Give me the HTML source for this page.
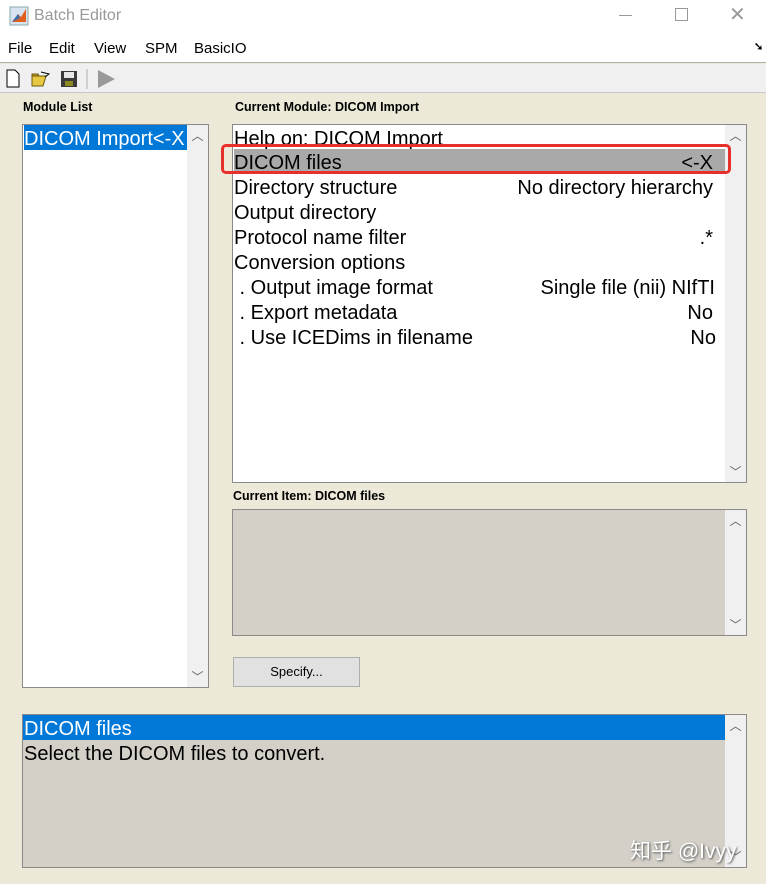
<!DOCTYPE html>
<html><head><meta charset="utf-8"><style>
*{margin:0;padding:0;box-sizing:border-box}
body{width:766px;height:884px;background:#ece9d8;font-family:"Liberation Sans",Arial,sans-serif;position:relative;overflow:hidden}
.a{position:absolute}
.title{left:0;top:0;width:766px;height:32px;background:#fff}
.menu{left:0;top:32px;width:766px;height:31px;background:#fff;border-bottom:1px solid #b0b0b0}
.tool{left:0;top:64px;width:766px;height:29px;background:#f0f0f0;border-bottom:1px solid #c8c8c8}
.lbl{font-size:12.5px;font-weight:bold;color:#000}
.box{border:1px solid #8a8a8a;background:#fff}
.sb{position:absolute;right:0;top:0;bottom:0;width:21px;background:#f0f0f0}
.sb .u,.sb .d{position:absolute;left:0;width:21px;text-align:center;font-size:12px;color:#606060}
.row{position:absolute;left:1px;height:25px;font-size:20px;line-height:25px;white-space:nowrap}
.t{position:absolute;left:0;top:2px}
.row span{position:absolute;right:12px;top:2px}
</style></head><body>
<div class="a title">
 <svg class="a" style="left:9px;top:6px" width="20" height="20"><rect x="1" y="1" width="18" height="18" fill="#d8e4f0" stroke="#8aa"/><path d="M3 16 L9 8 L12 11 L17 3 L17 16 Z" fill="#e06020"/><path d="M3 16 L9 8 L11 12 Z" fill="#3a6fb0"/></svg>
 <div class="a" style="left:34px;top:7px;font-size:16px;color:#999">Batch Editor</div>
 <div class="a" style="left:619px;top:15px;width:13px;height:1px;background:#999"></div>
 <div class="a" style="left:675px;top:8px;width:13px;height:13px;border:1px solid #999"></div>
 <div class="a" style="left:729px;top:2px;font-size:20px;color:#999">✕</div>
</div>
<div class="a menu">
 <div class="a" style="left:8px;top:8px;font-size:15px">File</div>
 <div class="a" style="left:49px;top:8px;font-size:15px">Edit</div>
 <div class="a" style="left:94px;top:8px;font-size:15px">View</div>
 <div class="a" style="left:145px;top:8px;font-size:15px">SPM</div>
 <div class="a" style="left:194px;top:8px;font-size:15px">BasicIO</div>
 <div class="a" style="left:754px;top:8px;font-size:11px;font-weight:bold">➘</div>
</div>
<div class="a tool">
 <svg class="a" style="left:5px;top:5px" width="85" height="20">
  <path d="M2 1 H10 L14 5 V18 H2 Z" fill="#fff" stroke="#000"/>
  <path d="M27 7 H41 L38 17 H27 Z" fill="#e8c840" stroke="#6a5a10"/><path d="M27 5 H33 L34 7 H27Z" fill="#c8a020" stroke="#6a5a10"/><path d="M36 3 L44 5 L40 8" fill="none" stroke="#000"/>
  <rect x="56" y="2" width="16" height="16" fill="#3a3a3a"/><rect x="59" y="3" width="10" height="6" fill="#e8e8e8"/><rect x="60" y="12" width="8" height="5" fill="#8a8a20"/>
  <line x1="82" y1="0" x2="82" y2="22" stroke="#b0b0b0"/>
 </svg>
 <svg class="a" style="left:96px;top:4px" width="22" height="22"><path d="M2 2 L19 11 L2 20 Z" fill="#9a9a9a"/></svg>
</div>

<div class="a lbl" style="left:23px;top:100px">Module List</div>
<div class="a box" style="left:22px;top:124px;width:187px;height:564px">
 <div class="row" style="top:0;width:164px;background:#0078d7;color:#fff;left:1px"><div class="t">DICOM Import&lt;-X</div></div>
 <div class="sb"><div class="u" style="top:2px">︿</div><div class="d" style="bottom:2px">﹀</div></div>
</div>

<div class="a lbl" style="left:235px;top:100px">Current Module: DICOM Import</div>
<div class="a box" style="left:232px;top:124px;width:515px;height:359px">
 <div class="row" style="top:0"><div class="t">Help on: DICOM Import</div></div>
 <div class="row" style="top:24px;width:491px;background:#a9a9a9"><div class="t">DICOM files</div><span>&lt;-X</span></div>
 <div class="row" style="top:49px;width:491px"><div class="t">Directory structure</div><span>No directory hierarchy</span></div>
 <div class="row" style="top:74px"><div class="t">Output directory</div></div>
 <div class="row" style="top:99px;width:491px"><div class="t">Protocol name filter</div><span>.*</span></div>
 <div class="row" style="top:124px"><div class="t">Conversion options</div></div>
 <div class="row" style="top:149px;width:491px"><div class="t">&nbsp;. Output image format</div><span style="right:10px">Single file (nii) NIfTI</span></div>
 <div class="row" style="top:174px;width:491px"><div class="t">&nbsp;. Export metadata</div><span>No</span></div>
 <div class="row" style="top:199px;width:491px"><div class="t">&nbsp;. Use ICEDims in filename</div><span style="right:9px">No</span></div>
 <div class="sb"><div class="u" style="top:2px">︿</div><div class="d" style="bottom:2px">﹀</div></div>
</div>
<div class="a" style="left:221px;top:144px;width:510px;height:30px;border:3px solid #e8302a;border-radius:5px"></div>

<div class="a lbl" style="left:233px;top:489px">Current Item: DICOM files</div>
<div class="a box" style="left:232px;top:509px;width:515px;height:127px;background:#d4d0c8">
 <div class="sb"><div class="u" style="top:2px">︿</div><div class="d" style="bottom:2px">﹀</div></div>
</div>

<div class="a" style="left:233px;top:657px;width:127px;height:30px;background:#e1e1e1;border:1px solid #adadad;font-size:13px;text-align:center;line-height:28px">Specify...</div>

<div class="a box" style="left:22px;top:714px;width:725px;height:154px;background:#d4d0c8">
 <div class="row" style="top:0;left:0;width:702px;background:#0078d7;color:#fff"><div class="t" style="left:1px">DICOM files</div></div>
 <div class="row" style="top:25px;left:0"><div class="t" style="left:1px">Select the DICOM files to convert.</div></div>
 <div class="sb"><div class="u" style="top:2px">︿</div><div class="d" style="bottom:2px">﹀</div></div>
</div>
<div class="a" style="left:630px;top:835px;font-size:21px;color:#fff;text-shadow:1px 1px 2px #555;font-family:'Liberation Sans','Noto Sans CJK SC',sans-serif">知乎 @Ivyy</div>
</body></html>
